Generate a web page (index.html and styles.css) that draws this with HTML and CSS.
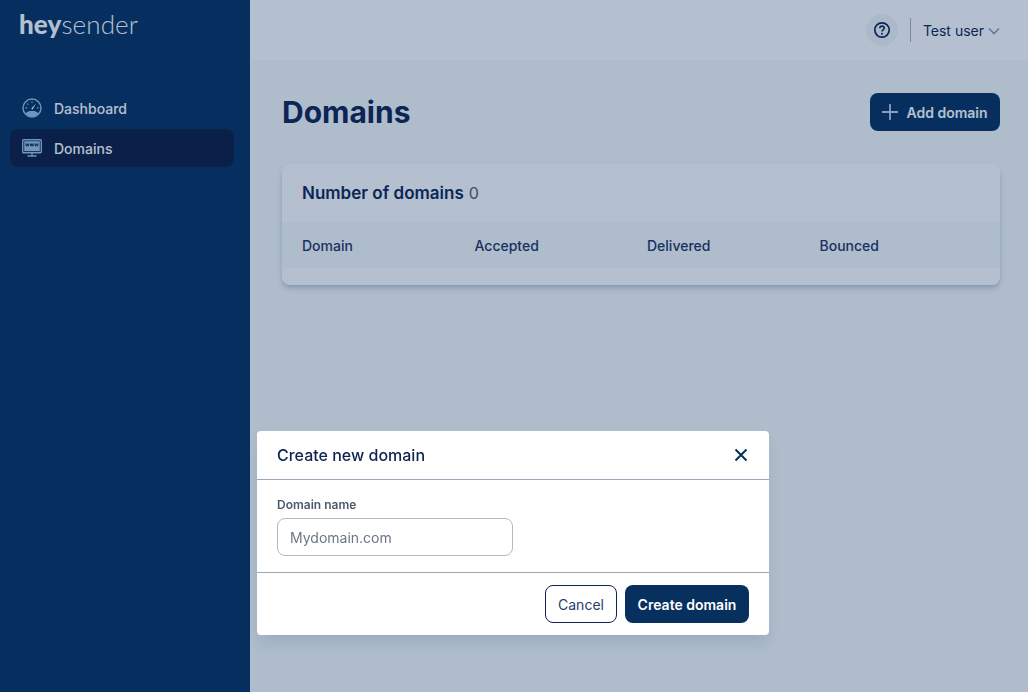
FILE: index.html
```html
<!DOCTYPE html>
<html lang="en">
<head>
<meta charset="utf-8">
<title>Domains - heysender</title>
<link rel="stylesheet" href="styles.css">
</head>
<body>
<div class="app">
  <aside class="sidebar">
    <div class="logo"><b>hey</b>sender</div>
    <nav class="nav">
      <a class="nav-item">
        <svg class="nav-icon" viewBox="0 0 20 20" fill="none">
          <circle cx="10" cy="10" r="9" stroke="#9cc3e6" stroke-width="1.4"/>
          <path d="M3.6 15.6a8.6 8.6 0 0 0 12.8 0c-1.2-2-3.6-2.6-6.4-2.6s-5.2.6-6.4 2.6z" fill="#9cc3e6"/>
          <path d="M9.2 10.4 14 5.6l-3.4 6z" fill="#fff"/>
          <path d="M3.6 9.8h1.6M5.4 5.6l1.1 1.1M10 3.4V5M15 9.8h1.6" stroke="#9cc3e6" stroke-width="1.2"/>
        </svg>
        <span>Dashboard</span>
      </a>
      <a class="nav-item active">
        <svg class="nav-icon" viewBox="0 0 20 20" fill="none">
          <rect x=".7" y="1.7" width="18.6" height="13" rx="1" stroke="#9cc3e6" stroke-width="1.4"/>
          <rect x="2.2" y="3.2" width="15.6" height="10" fill="#9cc3e6"/>
          <path d="M3.6 5.6l.8 2.6.9-2.6.9 2.6.8-2.6M8.2 5.6l.8 2.6.9-2.6.9 2.6.8-2.6M12.8 5.6l.8 2.6.9-2.6.9 2.6.8-2.6" stroke="#0d1b40" stroke-width=".9"/>
          <path d="M10 15v2.6M5.4 18h9.2" stroke="#9cc3e6" stroke-width="1.4"/>
        </svg>
        <span>Domains</span>
      </a>
    </nav>
  </aside>
  <div class="main">
    <header class="topbar">
      <span class="help">
        <svg width="18" height="18" viewBox="0 0 18 18" fill="none">
          <circle cx="9" cy="9" r="7.2" stroke="#0e2350" stroke-width="1.7"/>
          <path d="M6.8 7.2c0-1.3 1-2.1 2.2-2.1s2.2.8 2.2 2c0 1.700-2.200 1.700-2.200 3.400" stroke="#0e2350" stroke-width="1.600"/>
          <circle cx="9" cy="12.700" r="1" fill="#0e2350"/>
        </svg>
      </span>
      <span class="divider"></span>
      <span class="user">Test user</span>
      <svg class="chevron" width="12" height="8" viewBox="0 0 12 8" fill="none"><path d="M1 1.500l5 5 5-5" stroke="#8b9db0" stroke-width="1.600"/></svg>
    </header>
    <main class="content">
      <div class="page-head">
        <h1>Domains</h1>
        <button class="btn primary add">
          <svg width="16" height="16" viewBox="0 0 16 16" fill="none"><path d="M8 0v16M0 8h16" stroke="#c3d0de" stroke-width="1.800"/></svg>
          Add domain
        </button>
      </div>
      <section class="card">
        <div class="card-title"><strong>Number of domains</strong> <span>0</span></div>
        <div class="table-head">
          <span>Domain</span><span>Accepted</span><span>Delivered</span><span>Bounced</span>
        </div>
        <div class="table-foot"></div>
      </section>
    </main>
  </div>
</div>
<div class="overlay">
  <div class="modal">
    <div class="modal-head">
      <h2>Create new domain</h2>
      <svg width="14" height="14" viewBox="0 0 14 14" fill="none"><path d="M1.500 1.500l11 11M12.500 1.500l-11 11" stroke="#07305f" stroke-width="2"/></svg>
    </div>
    <div class="modal-body">
      <label class="label" for="dn">Domain name</label>
      <input class="input" id="dn" placeholder="Mydomain.com">
    </div>
    <div class="modal-foot">
      <button class="btn outline">Cancel</button>
      <button class="btn primary create">Create domain</button>
    </div>
  </div>
</div>
</body>
</html>
```
FILE: styles.css
```css
* { box-sizing: border-box; }
html, body { margin: 0; height: 100%; overflow: hidden; }
body { font-family: Inter, "Liberation Sans", sans-serif; color: #0e2350; background: #f7f9fa; }
.app { display: flex; height: 692px; }
.sidebar { width: 250px; flex: none; background: #07305f; padding: 0 16px 0 10px; }
.logo { font-family: Lato, sans-serif; font-size: 26px; line-height: 24px; height: 24px; margin: 12px 0 0 9px; color: #fff; font-weight: 300; letter-spacing: .1px; }
.logo b { font-weight: 900; }
.nav { margin-top: 53px; display: flex; flex-direction: column; gap: 2px; }
.nav-item { display: flex; align-items: center; gap: 12px; height: 38px; padding-left: 12px; border-radius: 8px; color: #fff; font-size: 14px; font-weight: 500; }
.nav-item.active { background: #0d1b40; }
.nav-icon { width: 20px; height: 20px; flex: none; }
.main { flex: 1; min-width: 0; }
.topbar { height: 60px; background: #fff; display: flex; align-items: center; justify-content: flex-end; padding-right: 28px; }
.help { width: 32px; height: 32px; border-radius: 50%; background: #f3f5f7; display: flex; align-items: center; justify-content: center; }
.divider { width: 1px; height: 24px; background: #a9b4c0; margin: 0 12px 0 12px; }
.user { font-size: 14px; color: #0e2350; }
.chevron { margin: 2px 0 0 4px; }
.content { padding: 33px 28px 0 32px; }
.page-head { display: flex; align-items: center; justify-content: space-between; height: 38px; }
h1 { margin: 0; font-size: 30px; font-weight: 700; color: #0e2350; }
.btn { font-family: inherit; font-size: 14px; height: 38px; border-radius: 8px; display: inline-flex; align-items: center; justify-content: center; font-weight: 600; }
.primary { background: #07305f; color: #fff; border: 0; }
.add { width: 130px; gap: 8px; }
.card { margin-top: 33px; background: #fff; border-radius: 8px; box-shadow: 0 4px 6px -1px rgba(7,48,95,.2), 0 2px 4px -1px rgba(7,48,95,.1); overflow: hidden; }
.card-title { height: 58px; padding: 0 20px; display: flex; align-items: center; gap: 5px; font-size: 16px; }
.card-title strong { font-size: 17px; font-weight: 600; }
.card-title span { color: #52606d; font-weight: 400; }
.table-head { height: 46px; background: #f7f9fa; padding: 0 20px; display: grid; grid-template-columns: repeat(4, 172.5px); align-items: center; font-size: 14px; font-weight: 500; color: #1f3364; }
.table-foot { height: 17px; }
.overlay { position: fixed; inset: 0; background: rgba(7,48,95,.3); }
.modal { position: absolute; left: 257px; top: 431px; width: 512px; height: 204px; background: #fff; border-radius: 4px; box-shadow: 0 10px 15px -3px rgba(7,48,95,.12); display: flex; flex-direction: column; }
.modal-head { height: 49px; border-bottom: 1px solid #9aa9b8; display: flex; align-items: center; justify-content: space-between; padding: 0 21px 0 20px; }
h2 { margin: 0; font-size: 16px; font-weight: 500; color: #0e2350; }
.modal-body { height: 93px; padding: 18px 20px 0; border-bottom: 1px solid #9aa9b8; }
.label { display: block; font-size: 12px; line-height: 14px; font-weight: 600; color: #4b5a6b; }
.input { display: block; width: 236px; height: 38px; margin-top: 6px; padding: 0 12px; border: 1px solid #b3b9c0; border-radius: 8px; font-family: inherit; font-size: 14px; outline: 0; }
.input::placeholder { color: #6b7785; opacity: 1; }
.modal-foot { flex: 1; display: flex; justify-content: flex-end; align-items: center; gap: 8px; padding: 0 20px; }
.outline { width: 72px; background: #fff; border: 1px solid #0e2350; color: #1f3f6e; font-weight: 400; }
.create { width: 124px; }
```
